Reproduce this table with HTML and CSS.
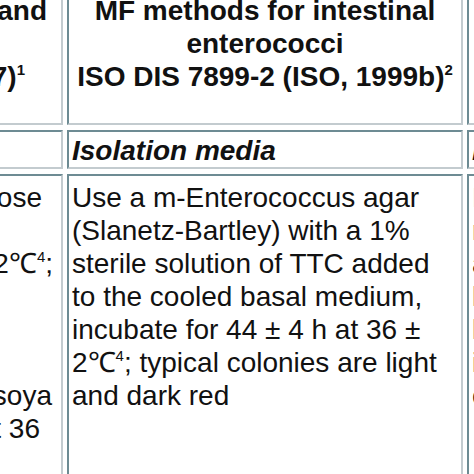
FILE: index.html
```html
<!DOCTYPE html>
<html>
<head>
<meta charset="utf-8">
<link rel="stylesheet" href="styles.css">
</head>
<body>
<div class="view">
<table class="grid">
  <tr class="head">
    <th class="c1">
      <div class="ln r e11">MF methods for E. coli and</div>
      <div class="ln">coliform bacteria</div>
      <div class="ln r e33">ISO 9308-1 (ISO, 1997)<sup>1</sup></div>
    </th>
    <th class="c2">MF methods for intestinal<br>enterococci<br>ISO DIS 7899-2 (ISO, 1999b)<sup>2</sup></th>
    <th class="c3"></th>
  </tr>
  <tr class="sub">
    <td><em class="ln">Isolation media</em></td>
    <td><em>Isolation media</em></td>
    <td><em>Isolation media</em></td>
  </tr>
  <tr class="body">
    <td>
      <div class="ln r e16">Use a lactose</div>
      <div class="ln">TTC agar with Tergitol 7,</div>
      <div class="ln r e5">incubate at 36 ± 2℃<sup>4</sup>;</div>
      <div class="ln">then confirm</div>
      <div class="ln">the colonies on</div>
      <div class="ln">a non-selective</div>
      <div class="ln r e6">tryptone soya</div>
      <div class="ln r e18">agar at 36</div>
      <div class="ln">± 2℃</div>
    </td>
    <td>Use a m-Enterococcus agar<br>(Slanetz-Bartley) with a 1%<br>sterile solution of TTC added<br>to the cooled basal medium,<br>incubate for 44 ± 4 h at 36 ±<br>2℃<sup>4</sup>; typical colonies are light<br>and dark red</td>
    <td><span class="gray">M</span>embrane<br>red colonies<br>are counted<br>lactose<br>lauryl<br>incubate<br>colonies</td>
  </tr>
</table>
</div>
</body>
</html>
```
FILE: styles.css
```css
html, body {
  margin: 0;
  padding: 0;
  background: #ffffff;
}
.view {
  width: 474px;
  height: 474px;
  overflow: hidden;
}
.grid {
  margin-left: -441px;
  margin-top: -15px;
  width: 1308px;
  table-layout: fixed;
  border-collapse: separate;
  border-spacing: 4px 5px;
  font-family: "Liberation Sans", Arial, Helvetica, sans-serif;
  font-size: 28px;
  line-height: 33px;
  color: #111111;
}
.grid th, .grid td {
  box-sizing: border-box;
  border-style: solid;
  border-width: 2px;
  border-color: #6d8b93 #c3cbcf #c3cbcf #6d8b93;
  padding: 0 3px;
  text-align: left;
  vertical-align: top;
}
.grid th {
  font-weight: bold;
  height: 135px;
  padding-top: 2px;
}
.grid th.c2 {
  text-align: center;
}
.c1 { width: 500px; }
.c2 { width: 396px; }
.c3 { width: 396px; }
.sub td {
  font-weight: bold;
  padding-top: 2px;
  padding-bottom: 0;
}
.sub em {
  font-style: italic;
}
.body td {
  height: 420px;
  padding-top: 5px;
}
.ln { display: block; white-space: nowrap; }
.r { text-align: right; }
.e5 { padding-right: 5px; }
.e6 { padding-right: 6px; }
.e11 { padding-right: 11px; }
.e16 { padding-right: 16px; }
.e18 { padding-right: 18px; }
.e33 { padding-right: 33px; }
sup {
  font-size: 15px;
  line-height: 0;
  vertical-align: 11px;
}
.gray { color: #8a8a8a; }
```
